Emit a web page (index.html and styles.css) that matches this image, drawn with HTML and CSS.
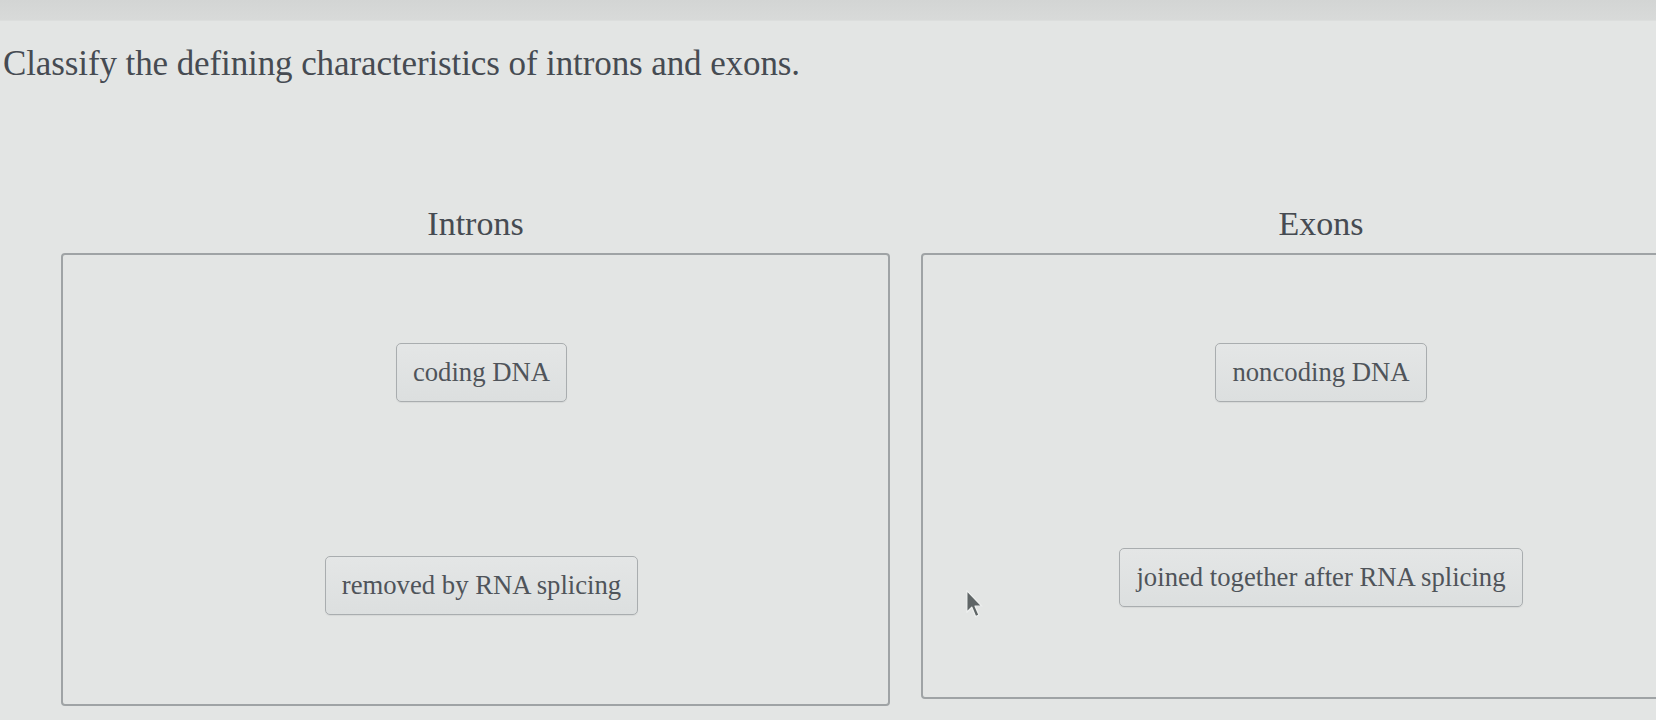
FILE: index.html
```html
<!DOCTYPE html>
<html lang="en">
<head>
<meta charset="utf-8">
<title>Classify introns and exons</title>
<link rel="stylesheet" href="styles.css">
</head>
<body>
<div class="topband"></div>
<main class="page">
  <h1 class="title">Classify the defining characteristics of introns and exons.</h1>
  <div class="columns">
    <section class="col col-left">
      <h2 class="col-head">Introns</h2>
      <div class="bin bin-left">
        <div class="chip">coding DNA</div>
        <div class="chip">removed by RNA splicing</div>
      </div>
    </section>
    <section class="col col-right">
      <h2 class="col-head">Exons</h2>
      <div class="bin bin-right">
        <div class="chip">noncoding DNA</div>
        <div class="chip">joined together after RNA splicing</div>
      </div>
    </section>
  </div>
</main>
<svg class="cursor" width="18" height="31" viewBox="0 0 16 28" aria-hidden="true">
  <path d="M1.5 1.5 L1.5 21 L6 16.5 L9.5 25 L12.5 23.5 L9 15.5 L15 15.5 Z" fill="#5f6566" stroke="#eef0ef" stroke-width="1.2" stroke-linejoin="round"/>
</svg>
</body>
</html>
```

FILE: styles.css
```css
html, body {
  margin: 0;
  padding: 0;
}
body {
  width: 1656px;
  height: 720px;
  overflow: hidden;
  background: #e3e5e4;
  font-family: "Liberation Serif", "Times New Roman", serif;
  color: #464b52;
  position: relative;
}
.topband {
  height: 20px;
  background: linear-gradient(#d3d5d4, #d8dad9);
  border-bottom: 1px solid #dcdedd;
}
.page {
  padding-left: 3px;
}
.title {
  margin: 0;
  padding-top: 23px;
  font-size: 35px;
  font-weight: normal;
  line-height: 40px;
  letter-spacing: -0.1px;
}
.columns {
  display: grid;
  grid-template-columns: 829px 800px;
  column-gap: 31px;
  padding-left: 58px;
  margin-top: 120px;
}
.col {
  display: flex;
  flex-direction: column;
  align-items: stretch;
}
.col-head {
  margin: 0;
  text-align: center;
  font-size: 34px;
  font-weight: normal;
  line-height: 40px;
  height: 40px;
  color: #464b52;
}
.bin {
  margin-top: 9px;
  border: 2px solid #9fa3a5;
  border-radius: 4px;
  display: flex;
  flex-direction: column;
  align-items: center;
  padding-top: 88px;
  gap: 154px;
  box-sizing: border-box;
}
.bin-left {
  height: 453px;
}
.bin-right {
  height: 446px;
  gap: 146px;
}
.col-left .chip {
  margin-left: 12px;
}
.chip {
  display: inline-block;
  padding: 13px 16px 14px;
  font-size: 26.7px;
  line-height: 30px;
  color: #4f545a;
  background: linear-gradient(#e4e6e6, #dcdfdf);
  border: 1.5px solid #a9adaf;
  border-radius: 5px;
  box-shadow: 0 1px 1px rgba(0, 0, 0, 0.06);
  white-space: nowrap;
}
.cursor {
  position: absolute;
  left: 965px;
  top: 589px;
}
```
